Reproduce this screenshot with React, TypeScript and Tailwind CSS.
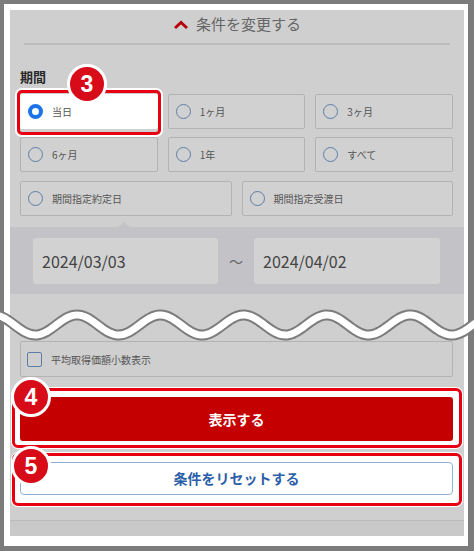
import React from "react";

const FONT = { fontFamily: '"Noto Sans CJK JP", "Noto Sans", sans-serif' };

function Radio({ checked }: { checked?: boolean }) {
  return checked ? (
    <span className="w-[15px] h-[15px] rounded-full border-[4px] border-[#1a73e8] bg-white shrink-0" />
  ) : (
    <span className="w-[15px] h-[15px] rounded-full border-[1.5px] border-[#5d7ea6] shrink-0" />
  );
}

function Option({ label, checked }: { label: string; checked?: boolean }) {
  return (
    <div
      className={
        "h-[35px] flex items-center gap-[9px] pl-[7px] border rounded-[2px] " +
        (checked ? "bg-white border-white" : "bg-[#d1d1d1] border-[#b3b3b3]")
      }
    >
      <Radio checked={checked} />
      <span className="text-[10px] text-[#555]">{label}</span>
    </div>
  );
}

function Badge({ n, x, y }: { n: string; x: number; y: number }) {
  return (
    <div
      className="absolute w-[40px] h-[40px] rounded-full bg-[#d80c18] border-[3px] border-white flex items-center justify-center text-white font-bold text-[23px] leading-none"
      style={{ left: x - 20, top: y - 20, fontFamily: '"Liberation Sans", Arial, sans-serif' }}
    >
      {n}
    </div>
  );
}

function wavePath() {
  const pts: string[] = [];
  for (let x = -5; x <= 480; x += 2) {
    const y = 25 - 10 * Math.cos((2 * Math.PI * (x - 77)) / 83.3);
    pts.push(`${x === -5 ? "M" : "L"}${x},${y.toFixed(2)}`);
  }
  return pts.join(" ");
}

export default function App() {
  const d = wavePath();
  return (
    <div
      className="relative w-[474px] h-[551px] overflow-hidden bg-[#7c7c7c] pt-[4px] pl-[4px] pr-[6px] pb-[5px]"
      style={FONT}
    >
      <div className="h-full bg-white pt-[6px] pl-[6px] pr-[4px] pb-[10px]">
        <div className="h-full bg-[#cfcfcf] flex flex-col">
          {/* header */}
          <div className="h-[33px] pb-[4px] flex items-center justify-center gap-[7px]">
            <svg width="16" height="10" viewBox="0 0 16 10">
              <path d="M2 8 L8 2.5 L14 8" fill="none" stroke="#b8000a" strokeWidth="3" />
            </svg>
            <span className="text-[15px] text-[#666]">条件を変更する</span>
          </div>
          <div className="mx-[14px] h-[2px] bg-[#bdbdbd]" />

          <div className="pl-[10px] pr-[11px]">
            <div className="mt-[23px] text-[13px] font-bold text-[#2a2a2a] leading-[18px]">期間</div>
            <div className="mt-[8px] grid grid-cols-3 gap-x-[10px]">
              <Option label="当日" checked />
              <Option label="1ヶ月" />
              <Option label="3ヶ月" />
            </div>
            <div className="mt-[8px] grid grid-cols-3 gap-x-[10px]">
              <Option label="6ヶ月" />
              <Option label="1年" />
              <Option label="すべて" />
            </div>
            <div className="mt-[9px] grid grid-cols-2 gap-x-[10px]">
              <Option label="期間指定約定日" />
              <Option label="期間指定受渡日" />
            </div>
          </div>

          {/* date band */}
          <div className="relative mt-[11px] h-[67px] bg-[#c3c3c7] pt-[11px] pl-[23px] pr-[24px] flex gap-0">
            <div className="absolute left-[108px] top-[-5px] w-0 h-0 border-l-[6px] border-r-[6px] border-b-[5px] border-l-transparent border-r-transparent border-b-[#c3c3c7]" />
            <div className="w-[185px] h-[46px] bg-[#d2d2d2] rounded-[3px] flex items-center pl-[9px] text-[16px] text-[#444]">
              2024/03/03
            </div>
            <div className="w-[36px] h-[46px] flex items-center justify-center text-[14px] text-[#666]">～</div>
            <div className="w-[186px] h-[46px] bg-[#d2d2d2] rounded-[3px] flex items-center pl-[9px] text-[16px] text-[#444]">
              2024/04/02
            </div>
          </div>

          {/* checkbox */}
          <div className="mt-[47px] mx-[10px] mr-[11px] h-[36px] border border-[#b3b3b3] rounded-[2px] flex items-center pl-[6px] gap-[9px]">
            <span className="w-[15px] h-[15px] border-[1.5px] border-[#5d7ea6] rounded-[2px]" />
            <span className="text-[10px] text-[#555]">平均取得価額小数表示</span>
          </div>

          {/* show button */}
          <div className="mt-[11px] mx-[2px] border-[3px] border-[#e60012] rounded-[6px] bg-white pt-[6px] pb-[4px] pl-[5px] pr-[6px] ring-1 ring-white">
            <div className="h-[44px] bg-[#c40000] rounded-[3px] flex items-center justify-center text-white font-bold text-[14px]">
              表示する
            </div>
          </div>

          {/* reset button */}
          <div className="mt-[5px] mx-[2px] border-[3px] border-[#e60012] rounded-[6px] bg-white pt-[6px] pb-[8px] pl-[5px] pr-[6px] ring-1 ring-white">
            <div className="h-[33px] bg-white border border-[#8fb0d8] rounded-[4px] flex items-center justify-center text-[#2d5fa8] font-bold text-[14px]">
              条件をリセットする
            </div>
          </div>

          <div className="mt-[14px] h-[1px] bg-[#bababa]" />
          <div className="flex-1 bg-[#c9c9c9]" />
        </div>
      </div>

      {/* wave overlay */}
      <svg className="absolute left-0 top-[300px]" width="474" height="50" viewBox="0 0 474 50">
        <path d={d} fill="none" stroke="#7c7c7c" strokeWidth="11" />
        <path d={d} fill="none" stroke="#ffffff" strokeWidth="7" />
      </svg>

      {/* highlight on selected option */}
      <div className="absolute left-[17px] top-[90px] w-[144px] h-[45px] border-[3px] border-[#e60012] rounded-[5px] ring-2 ring-white" />

      <Badge n="3" x={87} y={84} />
      <Badge n="4" x={31} y={397} />
      <Badge n="5" x={31} y={466} />
    </div>
  );
}
